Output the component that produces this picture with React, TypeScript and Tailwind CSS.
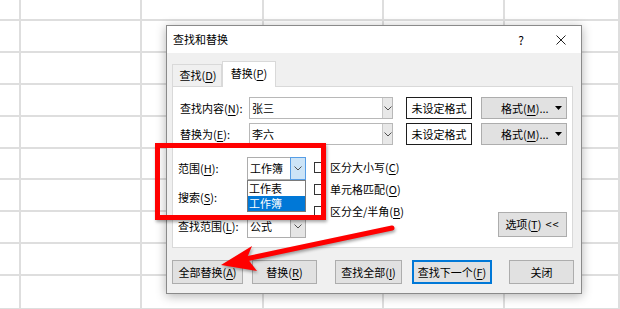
import React from 'react';

const colWidths = ['w-[21px]', 'w-[121px]', 'w-[122px]', 'w-[121px]', 'w-[121px]', 'w-[115px]'];
const rowHeights = ['h-[21px]', 'h-[32px]', 'h-[32px]', 'h-[32px]', 'h-[32px]', 'h-[31px]', 'h-[32px]', 'h-[32px]', 'h-[32px]', 'h-[34px]'];

const Chevron = () => (
  <svg width="8" height="5" viewBox="0 0 8 5">
    <polyline points="0.5,0.5 4,4 7.5,0.5" fill="none" stroke="#505050" strokeWidth="1" />
  </svg>
);

const Key = ({ k }: { k: string }) => (
  <>
    (<span className="underline underline-offset-[2px]">{k}</span>)
  </>
);

const Button = ({ className = '', children }: { className?: string; children: React.ReactNode }) => (
  <div className={`flex h-full items-center justify-center border border-[#adadad] bg-[#e1e1e1] ${className}`}>
    {children}
  </div>
);

const ComboBox = ({ text }: { text: string }) => (
  <div className="flex h-full w-[144px] border border-[#b8b8b8] bg-white">
    <span className="flex flex-1 items-center pl-[2px]">{text}</span>
    <div className="flex w-[10px] items-center justify-center border-l border-[#c8c8c8] bg-[#e8e8e8]">
      <Chevron />
    </div>
  </div>
);

const Select = ({ text, focused }: { text?: string; focused?: boolean }) => (
  <div className="flex h-full w-[59px]">
    <span className="flex flex-1 items-center border-y border-l border-[#adadad] bg-white pl-[2px]">{text}</span>
    <div
      className={
        focused
          ? 'flex w-[16px] items-center justify-center border border-[#569de5] bg-[#cce4f7]'
          : 'flex w-[16px] items-center justify-center border border-[#adadad] bg-[#e5e5e5]'
      }
    >
      <Chevron />
    </div>
  </div>
);

const Check = ({ children }: { children: React.ReactNode }) => (
  <div className="flex h-[22px] items-center">
    <div className="h-[11px] w-[11px] border border-[#333] bg-white" />
    <span className="ml-[5px]">{children}</span>
  </div>
);

export default function App() {
  return (
    <div className="relative h-[309px] w-[620px] overflow-hidden bg-white font-['Noto_Sans_CJK_SC','Microsoft_YaHei',sans-serif] text-[11px] leading-none text-black">
      {/* sheet grid */}
      <div className="flex flex-col">
        {rowHeights.map((h, r) => (
          <div key={r} className={`flex ${h}`}>
            {colWidths.map((w, c) => (
              <div key={c} className={`${w} h-full border-r-2 border-b-2 border-[#dedede]`} />
            ))}
          </div>
        ))}
      </div>

      {/* dialog */}
      <div className="absolute left-[166px] top-[25px] flex h-[269px] w-[416px] flex-col border border-[#8a8a8a] bg-white shadow-[0_2px_10px_rgba(0,0,0,0.3)]">
        <div className="flex h-[27px] items-center bg-white pl-[6px]">
          <span>查找和替换</span>
          <div className="ml-auto flex h-full">
            <div className="flex w-[40px] items-center justify-center text-[12px]">?</div>
            <div className="flex w-[40px] items-center justify-center">
              <svg width="10" height="10" viewBox="0 0 10 10">
                <path d="M0.5 0.5 L9.5 9.5 M9.5 0.5 L0.5 9.5" stroke="#222" strokeWidth="1" />
              </svg>
            </div>
          </div>
        </div>

        <div className="flex flex-1 flex-col bg-[#f0f0f0] px-[5px] pt-[8px]">
          {/* tabs */}
          <div className="flex h-[26px] items-end">
            <div className="flex h-[23px] w-[50px] items-center justify-center border border-[#d9d9d9] bg-[#f0f0f0] pl-[2px]">
              查找<Key k="D" />
            </div>
            <div className="relative z-10 flex h-[26px] w-[54px] items-center justify-center border-x border-t border-[#d9d9d9] bg-white pb-[2px]">
              替换<Key k="P" />
            </div>
          </div>

          {/* panel */}
          <div className="-mt-px flex h-[162px] w-[401px] flex-col border border-[#d9d9d9] bg-white pt-[10px]">
            <div className="flex h-[22px] items-center pl-[7px]">
              <span className="w-[69px]">查找内容<Key k="N" />:</span>
              <ComboBox text="张三" />
              <div className="ml-[13px] flex h-full w-[66px] items-center justify-center border border-[#1e1e1e] bg-white">未设定格式</div>
              <Button className="ml-[9px] w-[86px] !justify-start pl-[19px]">
                <span>格式<Key k="M" />...</span>
                <svg className="ml-auto mr-[4px]" width="7" height="4" viewBox="0 0 7 4">
                  <path d="M0 0 L7 0 L3.5 4 Z" fill="#000" />
                </svg>
              </Button>
            </div>
            <div className="mt-[4px] flex h-[22px] items-center pl-[7px]">
              <span className="w-[69px]">替换为<Key k="E" />:</span>
              <ComboBox text="李六" />
              <div className="ml-[13px] flex h-full w-[66px] items-center justify-center border border-[#1e1e1e] bg-white">未设定格式</div>
              <Button className="ml-[9px] w-[86px] !justify-start pl-[19px]">
                <span>格式<Key k="M" />...</span>
                <svg className="ml-auto mr-[4px]" width="7" height="4" viewBox="0 0 7 4">
                  <path d="M0 0 L7 0 L3.5 4 Z" fill="#000" />
                </svg>
              </Button>
            </div>

            {/* options */}
            <div className="mt-[12px] flex items-start pl-[5px]">
              <div className="flex flex-col gap-[6px]">
                <div className="flex h-[23px] items-center">
                  <span className="w-[69px]">范围<Key k="H" />:</span>
                  <div className="relative h-full">
                    <Select text="工作簿" focused />
                    <div className="absolute left-0 top-full z-20 flex w-[59px] flex-col border border-[#7a7a7a] bg-white">
                      <span className="flex h-[15px] items-center pl-[1px]">工作表</span>
                      <span className="flex h-[15px] items-center bg-[#0078d7] pl-[1px] text-white">工作簿</span>
                    </div>
                  </div>
                </div>
                <div className="flex h-[23px] items-center">
                  <span className="w-[69px]">搜索<Key k="S" />:</span>
                  <Select />
                </div>
                <div className="flex h-[23px] items-center">
                  <span className="w-[69px]">查找范围<Key k="L" />:</span>
                  <Select text="公式" />
                </div>
              </div>

              <div className="-mt-px ml-[8px] flex flex-col">
                <Check>区分大小写<Key k="C" /></Check>
                <Check>单元格匹配<Key k="O" /></Check>
                <Check>区分全/半角<Key k="B" /></Check>
              </div>

              <Button className="mb-px ml-auto mr-[5px] !h-[25px] w-[69px] self-end">
                选项<Key k="T" />
                <span className="ml-[4px] tracking-[1px]">&lt;&lt;</span>
              </Button>
            </div>
          </div>

          {/* bottom buttons */}
          <div className="mt-[12px] flex h-[24px]">
            <Button className="w-[71px]">全部替换<Key k="A" /></Button>
            <Button className="ml-[9px] w-[65px]">替换<Key k="R" /></Button>
            <Button className="ml-[18px] w-[67px]">查找全部<Key k="I" /></Button>
            <Button className="ml-[10px] w-[80px] border-2 !border-[#0078d7]">查找下一个<Key k="F" /></Button>
            <Button className="ml-[17px] w-[65px]">关闭</Button>
          </div>
        </div>
      </div>

      {/* annotation: red box */}
      <div className="absolute left-[155px] top-[143px] h-[77px] w-[171px] border-[5px] border-[#ff0000] shadow-[1px_2px_3px_rgba(0,0,0,0.35)]" />

      {/* annotation: arrow */}
      <svg className="pointer-events-none absolute left-0 top-0" width="620" height="309" viewBox="0 0 620 309">
        <g style={{ filter: 'drop-shadow(1px 2px 1.5px rgba(0,0,0,0.35))' }}>
          <line x1="392" y1="228" x2="248" y2="258.5" stroke="#ff0000" strokeWidth="5" strokeLinecap="round" />
          <polygon points="221,265 252,246 247,258 257,271" fill="#ff0000" />
        </g>
      </svg>
    </div>
  );
}
